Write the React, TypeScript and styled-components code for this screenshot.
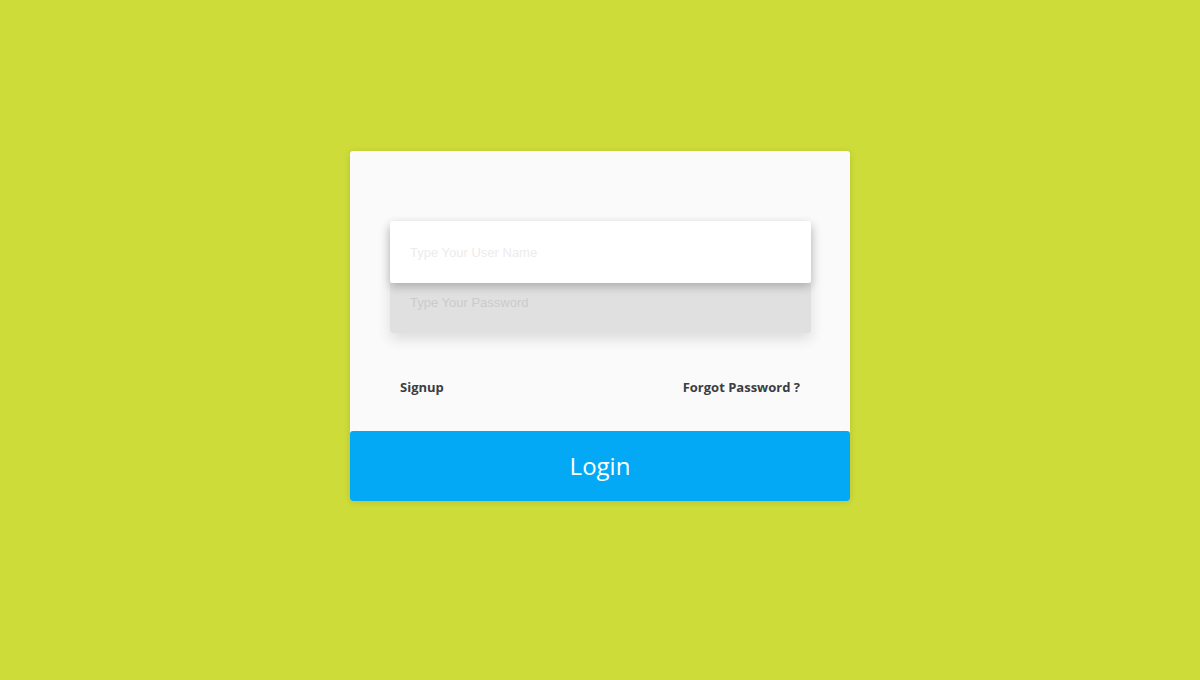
import React from 'react'
import styled, { createGlobalStyle } from 'styled-components'

const GlobalStyle = createGlobalStyle`
  html, body {
    margin: 0;
    padding: 0;
    height: 100%;
  }
  body {
    background: #cddc39;
    font-family: 'Open Sans', 'Liberation Sans', sans-serif;
  }
`

const Page = styled.main`
  width: 1200px;
  height: 680px;
  display: flex;
  justify-content: center;
  padding-top: 151px;
  box-sizing: border-box;
`

const Card = styled.section`
  width: 500px;
  height: 350px;
  background: #fafafa;
  border-radius: 3px;
  box-shadow: 0 1px 6px rgba(0, 0, 0, 0.12);
  display: flex;
  flex-direction: column;
`

const Fields = styled.div`
  margin: 70px 39px 0 40px;
  border-radius: 3px;
  box-shadow: 0 6px 14px rgba(0, 0, 0, 0.12);
  display: flex;
  flex-direction: column;
`

const Field = styled.input<{ $active?: boolean }>`
  border: none;
  outline: none;
  box-sizing: border-box;
  width: 100%;
  height: ${p => (p.$active ? '62px' : '50px')};
  padding: ${p => (p.$active ? '0 20px' : '0 20px 12px')};
  font-family: 'Liberation Sans', Arial, sans-serif;
  font-size: 13px;
  border-radius: ${p => (p.$active ? '3px' : '0 0 3px 3px')};
  background: ${p => (p.$active ? '#ffffff' : '#e0e0e0')};
  box-shadow: ${p => (p.$active ? '0 4px 10px rgba(0, 0, 0, 0.22)' : 'none')};
  position: relative;
  z-index: ${p => (p.$active ? 1 : 0)};

  &::placeholder {
    color: ${p => (p.$active ? '#ececec' : '#cbcbcb')};
  }
`

const Links = styled.div`
  height: 98px;
  box-sizing: border-box;
  padding: 45px 50px 0 50px;
  display: flex;
  justify-content: space-between;
`

const LinkText = styled.a`
  font-family: 'Open Sans', sans-serif;
  font-weight: 700;
  font-size: 13px;
  line-height: 18px;
  color: #3a3e44;
  text-decoration: none;
`

const LoginButton = styled.button`
  border: none;
  height: 70px;
  width: 100%;
  padding: 0 0 2px;
  background: #03a9f4;
  color: #ffffff;
  font-family: 'Open Sans', sans-serif;
  font-size: 24px;
  border-radius: 3px;
  cursor: pointer;
`

export default function App() {
  return (
    <>
      <GlobalStyle />
      <Page>
        <Card>
          <Fields>
            <Field $active placeholder="Type Your User Name" />
            <Field type="password" placeholder="Type Your Password" />
          </Fields>
          <Links>
            <LinkText href="#">Signup</LinkText>
            <LinkText href="#">Forgot Password ?</LinkText>
          </Links>
          <LoginButton>Login</LoginButton>
        </Card>
      </Page>
    </>
  )
}
